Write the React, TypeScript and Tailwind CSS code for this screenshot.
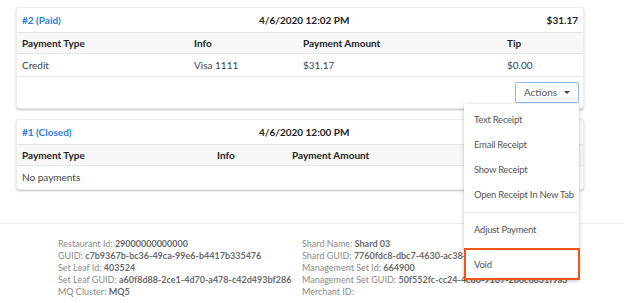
import React from 'react';

const font = { fontFamily: 'Lato, "Noto Sans", sans-serif' };

interface Payment {
  type: string;
  info: string;
  amount: string;
  tip: string;
}

interface CheckCardProps {
  title: string;
  date: string;
  total?: string;
  cols: string[];
  payments: Payment[];
  showActions?: boolean;
}

const CheckCard = ({ title, date, total, cols, payments, showActions }: CheckCardProps) => (
  <div className="w-[568px] bg-white rounded-[3px] shadow-[0_1px_2px_rgba(0,0,0,0.25)] border border-[#ececec]">
    <div className="h-[24px] flex items-center px-[5px] text-[10px] font-bold">
      <span className="text-[#2d7be5] w-[237px]">{title}</span>
      <span className="text-[#222] flex-1">{date}</span>
      <span className="text-[#222]">{total}</span>
    </div>
    <div className="h-[22px] flex items-center px-[5px] bg-[#f7f7f7] border-y border-[#e6e6e6] text-[10px] font-bold text-[#222]">
      <span className={cols[0]}>Payment Type</span>
      <span className={cols[1]}>Info</span>
      <span className={cols[2]}>Payment Amount</span>
      <span>Tip</span>
    </div>
    {payments.length === 0 ? (
      <div className="h-[23px] flex items-center px-[5px] text-[10px] text-[#444]">No payments</div>
    ) : (
      payments.map((p, i) => (
        <div key={i} className="h-[23px] flex items-center px-[5px] text-[10px] text-[#444] border-b border-[#e6e6e6]">
          <span className={cols[0]}>{p.type}</span>
          <span className={cols[1]}>{p.info}</span>
          <span className={cols[2]}>{p.amount}</span>
          <span>{p.tip}</span>
        </div>
      ))
    )}
    {showActions && (
      <div className="h-[31px] flex items-center justify-end pr-[4px]">
        <div className="h-[21px] w-[64px] flex items-center justify-center gap-[7px] border border-[#8db8ee] rounded-[2px] text-[10px] text-[#555]">
          Actions
          <span className="w-0 h-0 border-l-[3px] border-r-[3px] border-t-[3px] border-l-transparent border-r-transparent border-t-[#444]" />
        </div>
      </div>
    )}
  </div>
);

const menuItems = ['Text Receipt', 'Email Receipt', 'Show Receipt', 'Open Receipt In New Tab'];

const ActionsMenu = () => (
  <div className="absolute left-[464px] top-[104px] w-[115px] bg-white shadow-[0_1px_4px_rgba(0,0,0,0.25)] text-[9.5px] tracking-[-0.25px] text-[#555]">
    <div className="pt-[4px] pb-[4px]">
      {menuItems.map((m) => (
        <div key={m} className="h-[25px] flex items-center px-[10px] whitespace-nowrap">
          {m}
        </div>
      ))}
    </div>
    <div className="border-t border-[#e4e4e4] h-[36px] flex items-center px-[10px]">Adjust Payment</div>
    <div className="h-[32px] -mr-[1px] flex items-center pl-[8px] pt-[2px] border-2 border-[#f2541b]">Void</div>
  </div>
);

const Field = ({ label, value }: { label: string; value: string }) => (
  <div className="h-[12px] leading-[12px] whitespace-nowrap">
    <span className="text-[#8a8a8a]">{label}: </span>
    <span className="font-bold text-[#6a6a6a]">{value}</span>
  </div>
);

export default function App() {
  return (
    <div className="relative w-[624px] h-[303px] bg-white overflow-hidden" style={font}>
      <div className="pl-[16px] pt-[7px] flex flex-col gap-[10px]">
        <CheckCard
          title="#2 (Paid)"
          date="4/6/2020 12:02 PM"
          total="$31.17"
          cols={['w-[172px]', 'w-[109px]', 'w-[204px]']}
          payments={[{ type: 'Credit', info: 'Visa 1111', amount: '$31.17', tip: '$0.00' }]}
          showActions
        />
        <CheckCard
          title="#1 (Closed)"
          date="4/6/2020 12:00 PM"
          cols={['w-[195px]', 'w-[75px]', 'w-[204px]']}
          payments={[]}
        />
      </div>
      <div className="mt-[33px] border-t border-[#ececec] pt-[14px] flex text-[9px]">
        <div className="pl-[58px] w-[302px]">
          <Field label="Restaurant Id" value="29000000000000" />
          <Field label="GUID" value="c7b9367b-bc36-49ca-99e6-b4417b335476" />
          <Field label="Set Leaf Id" value="403524" />
          <Field label="Set Leaf GUID" value="a60f8d88-2ce1-4d70-a478-c42d493bf286" />
          <Field label="MQ Cluster" value="MQ5" />
        </div>
        <div>
          <Field label="Shard Name" value="Shard 03" />
          <Field label="Shard GUID" value="7760fdc8-dbc7-4630-ac38-1e5b2f7a9c04" />
          <Field label="Management Set Id" value="664900" />
          <Field label="Management Set GUID" value="50f552fc-cc24-4c80-9107-2b6c6631f9a3" />
          <Field label="Merchant ID" value="" />
        </div>
      </div>
      <ActionsMenu />
    </div>
  );
}
